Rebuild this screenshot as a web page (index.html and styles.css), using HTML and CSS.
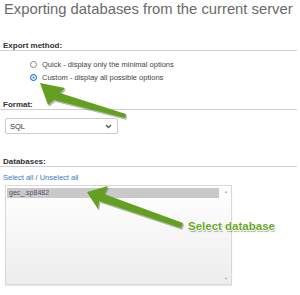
FILE: index.html
```html
<!DOCTYPE html>
<html lang="en">
<head>
    <meta charset="UTF-8">
    <title>Export</title>
    <link rel="stylesheet" href="styles.css">
</head>
<body>
<div class="page">

    <h2 class="title">Exporting databases from the current server</h2>

    <div class="section method">
        <h3>Export method:</h3>
        <ul class="radios">
            <li><span class="radio"></span>Quick - display only the minimal options</li>
            <li><span class="radio on"></span>Custom - display all possible options</li>
        </ul>
    </div>

    <div class="section format">
        <h3>Format:</h3>
        <div class="select">
            <span>SQL</span>
            <svg class="chev" width="7" height="5" viewBox="0 0 7 5"><path d="M1 1l2.5 2.5L6 1" fill="none" stroke="#555" stroke-width="1.3"/></svg>
        </div>
    </div>

    <div class="section databases">
        <h3>Databases:</h3>
        <div class="links"><a href="#">Select all</a> / <a href="#">Unselect all</a></div>
        <div class="listbox">
            <div class="option selected">gec_.sp8482</div>
            <div class="scroll">
                <span>&#9650;</span>
                <span>&#9660;</span>
            </div>
        </div>
    </div>

    <svg class="arrows" width="300" height="295" viewBox="0 0 300 295">
        <g transform="translate(1.2,1.8)" fill="rgba(40,50,20,0.35)">
            <polygon points="40,83 65,88 60,93 126,114 125,118 54,100 48,105"/>
            <polygon points="87,192 108,186 104,194 183,223 181,228 99,201 98,209"/>
        </g>
        <g fill="#63a022">
            <polygon points="40,83 65,88 60,93 126,114 125,118 54,100 48,105"/>
            <polygon points="87,192 108,186 104,194 183,223 181,228 99,201 98,209"/>
        </g>
    </svg>

    <div class="callout">Select database</div>

</div>
</body>
</html>
```

FILE: styles.css
```css
* {
    box-sizing: border-box;
}

html, body {
    width: 100%;
    height: 100%;
}

body {
    margin: 0;
    padding: 0;
    background: #fff;
    font-family: "Liberation Sans", Arial, sans-serif;
    color: #444;
}

.page {
    position: relative;
    width: 300px;
    height: 295px;
    overflow: hidden;
}

.title {
    margin: 0 0 0 4px;
    font-size: 14.8px;
    line-height: 18px;
    font-weight: normal;
    color: #6a6a6a;
    white-space: nowrap;
}

.section h3 {
    margin: 0 3px 0 0;
    padding-left: 3px;
    font-size: 8px;
    line-height: 9px;
    font-weight: bold;
    color: #333;
    border-bottom: 1px solid #d0d0d0;
}

.method {
    margin-top: 23px;
}

.radios {
    list-style: none;
    margin: 7px 0 0;
    padding: 0 0 0 30px;
    font-size: 7.5px;
}

.radios li {
    display: flex;
    align-items: center;
    height: 13px;
}

.radio {
    width: 7px;
    height: 7px;
    margin-right: 5px;
    border: 1px solid #888;
    border-radius: 50%;
    background: #fff;
}

.radio.on {
    border-color: #1a73e8;
    background: #1a73e8;
    box-shadow: inset 0 0 0 1.5px #fff;
}

.format {
    margin-top: 16px;
}

.select {
    display: flex;
    align-items: center;
    justify-content: space-between;
    width: 113px;
    height: 16px;
    margin: 8px 0 0 5px;
    padding: 0 5px 0 4px;
    border: 1px solid #ccc;
    border-radius: 2px;
    font-size: 7.5px;
    color: #333;
}

.databases {
    margin-top: 23px;
}

.links {
    margin-top: 6px;
    padding-left: 3px;
    font-size: 7.5px;
    line-height: 10px;
    color: #555;
}

.links a {
    color: #3a7bbf;
    text-decoration: none;
}

.listbox {
    position: relative;
    width: 227px;
    height: 100px;
    margin: 2px 0 0 5px;
    padding: 2px 12px 0 1px;
    border: 1px solid #d8d8d8;
    background: linear-gradient(#fff, #ededed);
    box-shadow: 0 1px 1px rgba(0, 0, 0, 0.08);
}

.option {
    height: 10px;
    padding-left: 2px;
    font-size: 7px;
    line-height: 10px;
    color: #55506a;
}

.option.selected {
    background: #c9c9c9;
}

.scroll {
    position: absolute;
    top: 3px;
    right: 3px;
    bottom: 3px;
    display: flex;
    flex-direction: column;
    justify-content: space-between;
    font-size: 4px;
    color: #aaa;
}

.arrows {
    position: absolute;
    top: 0;
    left: 0;
}

.callout {
    position: absolute;
    left: 188px;
    top: 220px;
    font-size: 11.5px;
    font-weight: bold;
    color: #6aa829;
    text-shadow: -1px 0 #fff, 1px 0 #fff, 0 -1px #fff, 0 1px #fff, 1px 2px 1px rgba(0, 0, 0, 0.35);
}
```
